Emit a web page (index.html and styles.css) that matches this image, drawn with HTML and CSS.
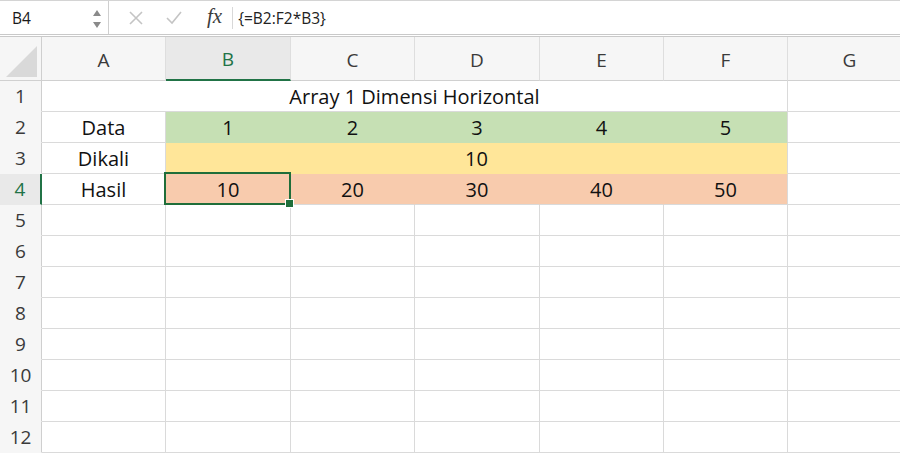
FILE: index.html
```html
<!DOCTYPE html>
<html lang="en">
<head>
  <meta charset="UTF-8" />
  <meta name="viewport" content="width=device-width, initial-scale=1.0"/>
  <title>Array 1 Dimensi Horizontal</title>
  <link rel="stylesheet" href="styles.css">
</head>
<body>

  <div class="formula-bar">
    <div class="name-box">
      <span>B4</span>
      <span class="spin">
        <svg width="10" height="20" viewBox="0 0 10 20"><path d="M5 1 L9 7 L1 7 Z M1 13 L9 13 L5 19 Z" fill="#8a8a8a"/></svg>
      </span>
    </div>
    <svg class="icon cancel" width="14" height="14" viewBox="0 0 14 14"><path d="M1 1 L13 13 M13 1 L1 13" stroke="#c4c4c4" stroke-width="1.6" fill="none"/></svg>
    <svg class="icon enter" width="16" height="14" viewBox="0 0 16 14"><path d="M1 7 L6 12 L15 1" stroke="#c4c4c4" stroke-width="1.6" fill="none"/></svg>
    <span class="fx">fx</span>
    <span class="divider"></span>
    <span class="formula">{=B2:F2*B3}</span>
  </div>

  <div class="sheet">
    <!-- column headers -->
    <div class="hd corner"><span class="tri"></span></div>
    <div class="hd col">A</div>
    <div class="hd col active">B</div>
    <div class="hd col">C</div>
    <div class="hd col">D</div>
    <div class="hd col">E</div>
    <div class="hd col">F</div>
    <div class="hd col">G</div>

    <!-- row 1 -->
    <div class="hd row">1</div>
    <div class="cell title">Array 1 Dimensi Horizontal</div>
    <div class="cell"></div>

    <!-- row 2 -->
    <div class="hd row">2</div>
    <div class="cell">Data</div>
    <div class="cell green">1</div>
    <div class="cell green">2</div>
    <div class="cell green">3</div>
    <div class="cell green">4</div>
    <div class="cell green last">5</div>
    <div class="cell"></div>

    <!-- row 3 -->
    <div class="hd row">3</div>
    <div class="cell">Dikali</div>
    <div class="cell yellow span5">10</div>
    <div class="cell"></div>

    <!-- row 4 -->
    <div class="hd row active">4</div>
    <div class="cell">Hasil</div>
    <div class="cell orange sel">10</div>
    <div class="cell orange">20</div>
    <div class="cell orange">30</div>
    <div class="cell orange">40</div>
    <div class="cell orange last">50</div>
    <div class="cell"></div>

    <!-- empty rows -->
    <div class="hd row">5</div>
    <div class="cell"></div><div class="cell"></div><div class="cell"></div><div class="cell"></div><div class="cell"></div><div class="cell"></div><div class="cell"></div>
    <div class="hd row">6</div>
    <div class="cell"></div><div class="cell"></div><div class="cell"></div><div class="cell"></div><div class="cell"></div><div class="cell"></div><div class="cell"></div>
    <div class="hd row">7</div>
    <div class="cell"></div><div class="cell"></div><div class="cell"></div><div class="cell"></div><div class="cell"></div><div class="cell"></div><div class="cell"></div>
    <div class="hd row">8</div>
    <div class="cell"></div><div class="cell"></div><div class="cell"></div><div class="cell"></div><div class="cell"></div><div class="cell"></div><div class="cell"></div>
    <div class="hd row">9</div>
    <div class="cell"></div><div class="cell"></div><div class="cell"></div><div class="cell"></div><div class="cell"></div><div class="cell"></div><div class="cell"></div>
    <div class="hd row">10</div>
    <div class="cell"></div><div class="cell"></div><div class="cell"></div><div class="cell"></div><div class="cell"></div><div class="cell"></div><div class="cell"></div>
    <div class="hd row">11</div>
    <div class="cell"></div><div class="cell"></div><div class="cell"></div><div class="cell"></div><div class="cell"></div><div class="cell"></div><div class="cell"></div>
    <div class="hd row">12</div>
    <div class="cell"></div><div class="cell"></div><div class="cell"></div><div class="cell"></div><div class="cell"></div><div class="cell"></div><div class="cell"></div>
  </div>

</body>
</html>
```

FILE: styles.css
```css
* {
  box-sizing: border-box;
}
body {
  margin: 0;
  width: 900px;
  height: 453px;
  overflow: hidden;
  background: #fff;
  font-family: "Open Sans", Arial, sans-serif;
  color: #1a1a1a;
}

/* formula bar */
.formula-bar {
  display: flex;
  align-items: center;
  height: 37px;
  border-top: 1px solid #d4d4d4;
  border-bottom: 3px double #c9c9c9;
  background: #fff;
  font-size: 15.5px;
}
.name-box {
  display: flex;
  align-items: center;
  justify-content: space-between;
  width: 109px;
  height: 100%;
  padding: 0 6px 0 12px;
  border-right: 1px solid #cfcfcf;
}
.spin {
  display: flex;
  margin-top: 2px;
}
.icon.cancel {
  margin-left: 20px;
}
.icon.enter {
  margin-left: 23px;
}
.fx {
  margin-left: 25px;
  font-family: "Liberation Serif", serif;
  font-style: italic;
  font-size: 21px;
  color: #3c3c3c;
  margin-top: -3px;
}
.divider {
  width: 1px;
  height: 22px;
  margin-left: 10px;
  background: #d8d8d8;
}
.formula {
  margin-left: 5px;
  color: #222;
}

/* grid */
.sheet {
  display: grid;
  grid-template-columns: 42px 124px 125px 124px 125px 124px 124px 124px;
  grid-template-rows: 44px repeat(12, 31px);
}
.hd {
  display: flex;
  align-items: center;
  justify-content: center;
  background: #f6f6f6;
  color: #3a3a3a;
  font-size: 19px;
  border-right: 1px solid #dedede;
  border-bottom: 1px solid #d0d0d0;
}
.hd.col {
  padding-top: 2px;
}
.hd.corner {
  position: relative;
  border-right-color: #cfcfcf;
}
.tri {
  position: absolute;
  right: 4px;
  bottom: 3px;
  width: 0;
  height: 0;
  border-left: 31px solid transparent;
  border-bottom: 31px solid #d9d9d9;
}
.hd.col.active {
  background: #e9e9e9;
  color: #217346;
  border-bottom: 2px solid #217346;
}
.hd.row {
  background: #f6f6f6;
  border-right-color: #cfcfcf;
  border-bottom-color: #f6f6f6;
}
.hd.row.active {
  background: #e9e9e9;
  color: #217346;
  border-right: 2px solid #217346;
  border-bottom-color: #e9e9e9;
}

.cell {
  display: flex;
  align-items: center;
  justify-content: center;
  font-size: 20px;
  color: #111;
  border-right: 1px solid #dadada;
  border-bottom: 1px solid #dadada;
}
.cell.title {
  grid-column: span 6;
}
.cell.span5 {
  grid-column: span 5;
}
.cell.green {
  background: #c6e0b4;
  border-color: #c6e0b4;
}
.cell.yellow {
  background: #ffe699;
  border-color: #ffe699;
  border-right-color: #dadada;
}
.cell.orange {
  background: #f8cbad;
  border-right-color: #f8cbad;
  border-bottom-color: #dadada;
}
.cell.last {
  border-right-color: #dadada;
}

/* active cell outline */
.cell.sel {
  position: relative;
}
.cell.sel::after {
  content: "";
  position: absolute;
  left: -2px;
  top: -2px;
  right: -1px;
  bottom: -1px;
  border: 2px solid #1f6e3a;
}
.cell.sel::before {
  content: "";
  position: absolute;
  right: -4px;
  bottom: -4px;
  width: 7px;
  height: 7px;
  background: #1f6e3a;
  border: 1px solid #fff;
  z-index: 1;
}
```
